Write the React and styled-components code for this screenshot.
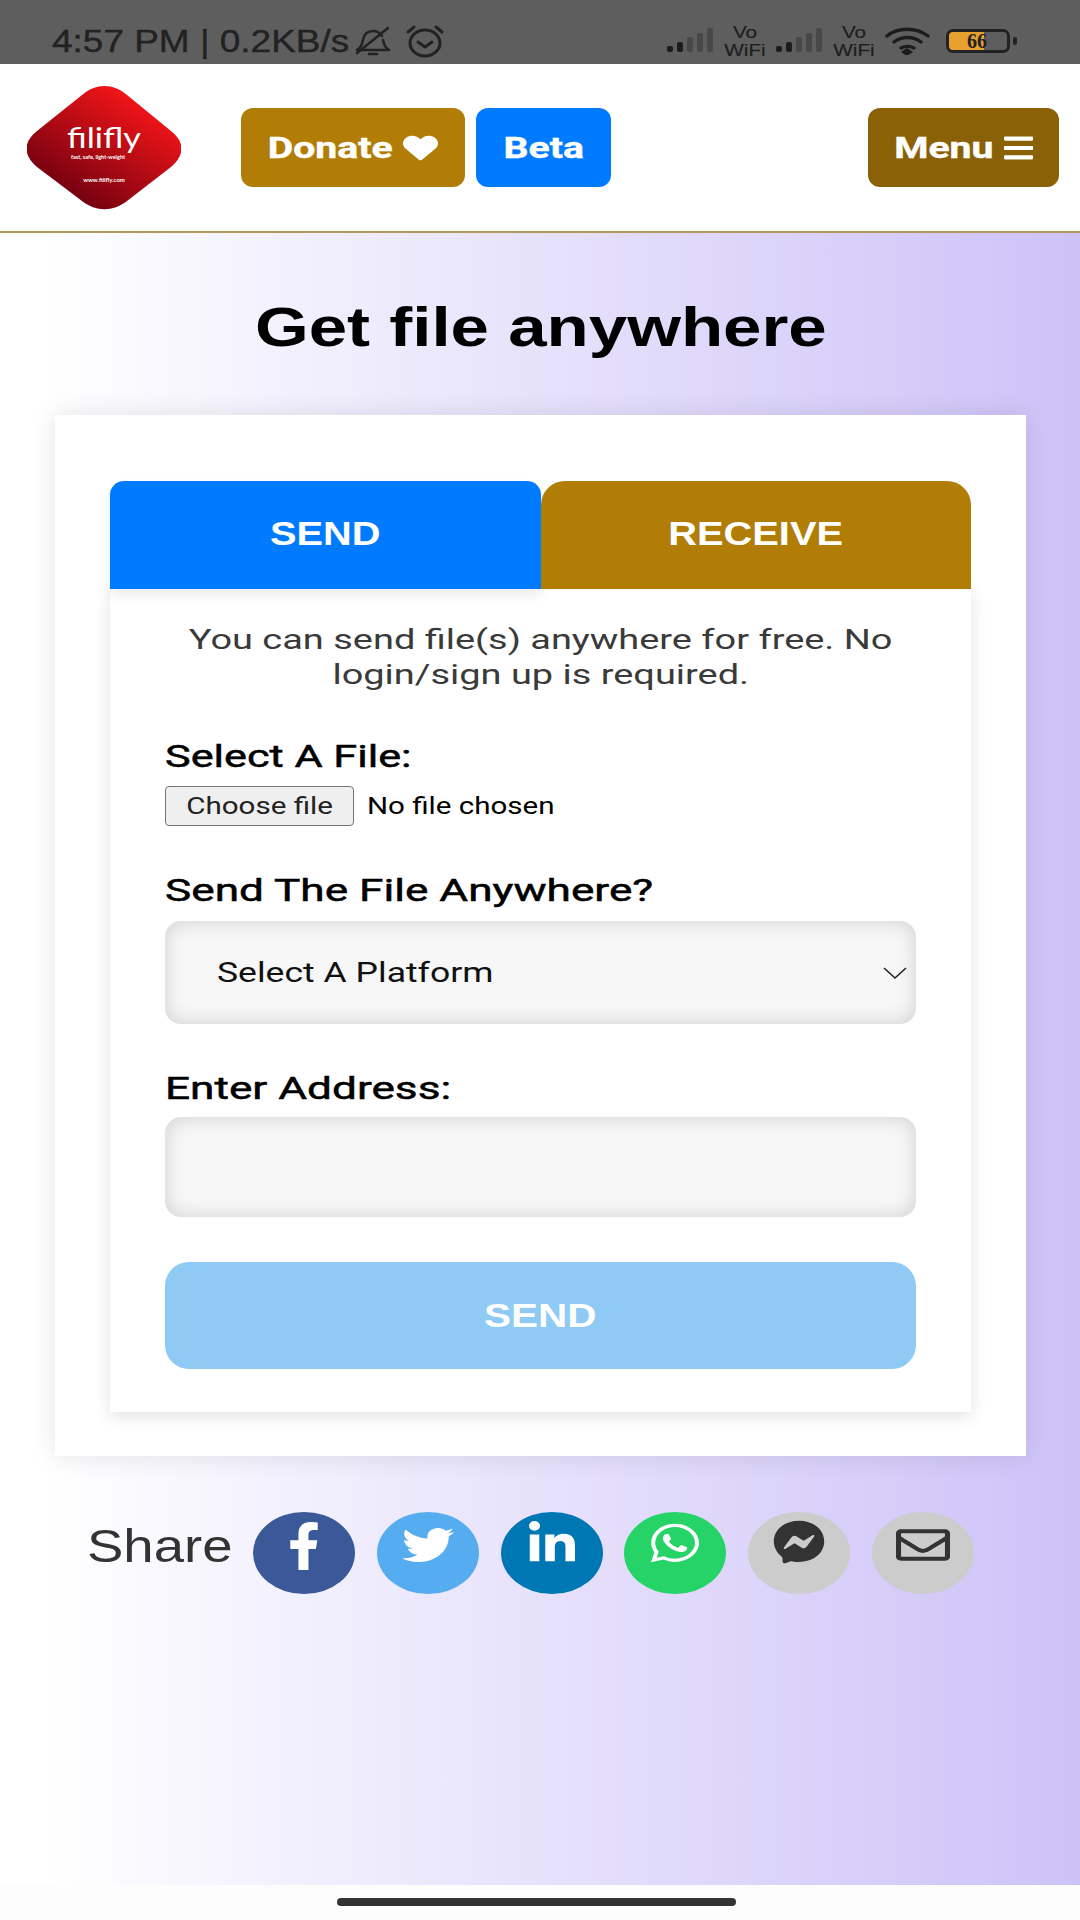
import React from 'react';
import styled, { createGlobalStyle } from 'styled-components';
import { FaHeart, FaBars, FaFacebookF, FaTwitter, FaLinkedinIn, FaWhatsapp, FaFacebookMessenger, FaRegEnvelope } from 'react-icons/fa';

const GlobalStyle = createGlobalStyle`
  html, body { margin: 0; padding: 0; background: #fdfdfd; }
  * { box-sizing: border-box; }
`;

const Page = styled.div`
  width: 1080px;
  height: 1920px;
  display: flex;
  flex-direction: column;
  overflow: hidden;
  font-family: Roboto, sans-serif;
`;

// the whole screenshot is stretched sideways, text has to follow
const Wide = styled.span`
  display: inline-block;
  white-space: nowrap;
  transform: scaleX(${(p) => p.$x || 1.22});
  transform-origin: ${(p) => p.$origin || 'center'};
  margin: 0 ${(p) => p.$m || 0}px;
`;

const StatusBar = styled.div`
  height: 64px;
  flex: none;
  background: #5e5e5e;
  color: #222;
  display: flex;
  align-items: center;
  padding: 18px 70px 0 52px;
`;

const Clock = styled.div`
  width: 303px;
  font: 32px 'Liberation Sans', sans-serif;
  line-height: 40px;
  -webkit-text-stroke: 0.4px #222;
`;

const StatusIcons = styled.div`
  margin-left: auto;
  display: flex;
  align-items: center;
  gap: 10px;
`;

const VoWifi = styled.div`
  width: 43px;
  padding-top: 2px;
  font: 500 17px/18px 'Liberation Sans', sans-serif;
  text-align: center;
  color: #1e1e1e;
  -webkit-text-stroke: 0.2px #1e1e1e;
`;

const Battery = styled.div`
  width: 64px;
  height: 24px;
  border: 3px solid #222;
  border-radius: 7px;
  margin-left: 6px;
  position: relative;
  font: 700 20px/18px 'Liberation Serif', serif;
  color: #222;
  background: linear-gradient(90deg, #e6a02f 0 60%, transparent 60%);
  padding-left: 18px;
  &::after {
    content: '';
    position: absolute;
    right: -10px;
    top: 5px;
    width: 4px;
    height: 8px;
    background: #222;
    border-radius: 2px;
  }
`;

const Header = styled.header`
  height: 169px;
  flex: none;
  background: #fff;
  border-bottom: 2px solid #b09a60;
  display: flex;
  align-items: center;
  padding: 0 21px 0 27px;
`;

const Logo = styled.svg`
  width: 154px;
  height: 124px;
  flex: none;
  margin-right: 60px;
`;

const NavButton = styled.div`
  height: 79px;
  width: ${(p) => p.$w}px;
  margin-right: ${(p) => p.$mr || 0}px;
  margin-left: ${(p) => (p.$right ? 'auto' : '0')};
  background: ${(p) => p.$bg};
  border-radius: 12px;
  color: #fff;
  font: 700 29px 'Roboto', sans-serif;
  -webkit-text-stroke: 0.4px #fff;
  display: flex;
  align-items: center;
  justify-content: center;
  gap: 10px;
  svg { flex: none; }
`;

const Main = styled.main`
  flex: 1;
  background: linear-gradient(90deg, #fff 4%, #cdc2f8 100%);
  padding: 0 54px 0 55px;
`;

const Title = styled.h1`
  margin: 0;
  height: 182px;
  padding-top: 60px;
  text-align: center;
  font: 700 56px/68px 'Liberation Sans', sans-serif;
  color: #000;
`;

const Card = styled.section`
  background: #fff;
  height: 1041px;
  padding: 66px 55px 0;
  box-shadow: 0 0 24px rgba(0, 0, 0, 0.1);
`;

const Tabs = styled.div`
  display: grid;
  grid-template-columns: 431px 430px;
  height: 108px;
`;

const Tab = styled.div`
  background: ${(p) => p.$bg};
  border-radius: ${(p) => (p.$last ? '24px 24px 0 0' : '14px 14px 0 0')};
  color: #fff;
  font: 700 34px 'Liberation Sans', sans-serif;
  display: flex;
  align-items: center;
  justify-content: center;
  padding-bottom: 3px;
  box-shadow: ${(p) => (p.$last ? 'none' : '0 6px 12px rgba(0, 0, 0, 0.08)')};
`;

const Panel = styled.div`
  height: 823px;
  padding: 33px 55px 0;
  box-shadow: 0 4px 16px rgba(0, 0, 0, 0.12);
`;

const Intro = styled.p`
  margin: 0 0 46px;
  text-align: center;
  font: 400 28px/35px Roboto, sans-serif;
  color: #3a3a3a;
`;

const Label = styled.div`
  font: 400 32px/36px Roboto, sans-serif;
  -webkit-text-stroke: 0.5px #000;
  color: #000;
  margin-bottom: ${(p) => p.$mb || 0}px;
`;

const FileRow = styled.div`
  display: flex;
  align-items: center;
  height: 40px;
  margin: 12px 0 46px;
  font: 400 24px Roboto, sans-serif;
  color: #000;
`;

const ChooseFile = styled.div`
  width: 189px;
  height: 40px;
  background: #efefef;
  border: 1px solid #767676;
  border-radius: 4px;
  color: #222;
  display: flex;
  align-items: center;
  justify-content: center;
  margin-right: 13px;
`;

const Field = styled.div`
  height: ${(p) => p.$h}px;
  background: #f7f7f7;
  border-radius: 16px;
  box-shadow: inset 0 0 20px rgba(0, 0, 0, 0.16);
  display: flex;
  align-items: center;
  justify-content: space-between;
  padding: 0 9px 0 52px;
  margin-bottom: ${(p) => p.$mb}px;
  font: 400 28px Roboto, sans-serif;
  color: #111;
`;

const SendButton = styled.div`
  height: 107px;
  background: #8fcaf4;
  border-radius: 24px;
  color: #fff;
  font: 700 34px 'Liberation Sans', sans-serif;
  display: flex;
  align-items: center;
  justify-content: center;
`;

const ShareRow = styled.div`
  display: flex;
  align-items: center;
  margin-top: 56px;
  padding-left: 32px;
  height: 82px;
`;

const ShareLabel = styled.div`
  width: 166px;
  padding-bottom: 16px;
  font: 400 47px 'Liberation Sans', sans-serif;
  color: #333;
`;

const Circle = styled.div`
  width: 102px;
  height: 82px;
  border-radius: 50%;
  background: ${(p) => p.$bg};
  color: ${(p) => p.$fg || '#fff'};
  margin-right: 21.8px;
  display: flex;
  justify-content: center;
  padding-top: ${(p) => p.$top || 0}px;
  flex: none;
`;

const HomeStrip = styled.div`
  height: 35px;
  flex: none;
  background: #fdfdfd;
  display: flex;
  justify-content: center;
  padding: 13px 7px 0 0;
`;

const HomeBar = styled.div`
  width: 399px;
  height: 8px;
  border-radius: 4px;
  background: #333;
`;

const Stretched = ({ as: Icon, w, h }) => (
  <Icon style={{ width: w, height: h }} preserveAspectRatio="none" />
);

const Signal = () => (
  <svg width="46" height="26" viewBox="0 0 46 26">
    <rect x="0" y="18" width="6" height="6" rx="2" fill="#1c1c1c" />
    <rect x="10" y="14" width="6" height="10" rx="2" fill="#1c1c1c" />
    <rect x="20" y="9" width="6" height="15" rx="2" fill="#484848" />
    <rect x="30" y="5" width="6" height="19" rx="2" fill="#484848" />
    <rect x="40" y="0" width="6" height="24" rx="2" fill="#484848" />
  </svg>
);

export default function App() {
  return (
    <Page>
      <GlobalStyle />
      <StatusBar>
        <Clock>
          <Wide $origin="left" $x={1.155}>4:57 PM | 0.2KB/s</Wide>
        </Clock>
        <svg width="36" height="30" viewBox="0 0 36 30" fill="none" stroke="#222" strokeWidth="2.6" strokeLinecap="round" strokeLinejoin="round">
          <path d="M2 24c4-2 5-5 6-10 1-6 5-9 10-9 4 0 7 2 9 5M28 14c1 5 2 8 6 10H6" />
          <path d="M33 2 2 27M14 28h8" />
        </svg>
        <svg width="40" height="34" viewBox="0 0 40 34" fill="none" stroke="#222" strokeWidth="3" strokeLinecap="round" strokeLinejoin="round" style={{ marginLeft: 14 }}>
          <ellipse cx="20" cy="19" rx="15" ry="13" />
          <path d="M13 18l7 5 7-5M3 8l6-5M37 8l-6-5" />
        </svg>
        <StatusIcons>
          <Signal />
          <VoWifi><Wide>Vo<br />WiFi</Wide></VoWifi>
          <Signal />
          <VoWifi><Wide>Vo<br />WiFi</Wide></VoWifi>
          <svg width="45" height="28" viewBox="0 0 45 28" fill="none" stroke="#1c1c1c" strokeWidth="3.4" strokeLinecap="round">
            <path d="M2 9c11-9 29-9 41 0M9 15c8-6 19-6 27 0M16 21c4-2 9-2 13 0" />
            <path d="M19 25l3-2 3 2-3 2z" fill="#1c1c1c" />
          </svg>
          <Battery>66</Battery>
        </StatusIcons>
      </StatusBar>

      <Header>
        <Logo viewBox="0 0 154 124">
          <defs>
            <linearGradient id="logoFill" x1="0.2" y1="0.9" x2="0.8" y2="0.15">
              <stop offset="0" stopColor="#6c0010" />
              <stop offset="1" stopColor="#f51518" />
            </linearGradient>
          </defs>
          <path
            d="M55 9c14-12 31-12 45 0l44 36c14 11 14 24 0 36l-44 34c-14 11-31 11-45 0L10 81C-4 69-4 56 10 45z"
            fill="url(#logoFill)"
          />
          <text x="77" y="62" textAnchor="middle" fill="#fff" fontFamily="Lato, sans-serif" fontSize="29" textLength="74" lengthAdjust="spacingAndGlyphs">filifly</text>
          <text x="71" y="73" textAnchor="middle" fill="#fff" fontFamily="Lato, sans-serif" fontSize="5.5" fontWeight="700">fast, safe, light-weight</text>
          <text x="77" y="96" textAnchor="middle" fill="#fff" fontFamily="Lato, sans-serif" fontSize="6" fontWeight="700">www.filifly.com</text>
        </Logo>
        <NavButton $w={224} $mr={11} $bg="#b27d06">
          <Wide $x={1.35} $m={16}>Donate</Wide>
          <Stretched as={FaHeart} w={35} h={28} />
        </NavButton>
        <NavButton $w={135} $bg="#007bff"><Wide $x={1.35}>Beta</Wide></NavButton>
        <NavButton $w={191} $right $bg="#8b6107">
          <Wide $x={1.35} $m={13}>Menu</Wide>
          <Stretched as={FaBars} w={29} h={30} />
        </NavButton>
      </Header>

      <Main>
        <Title><Wide $x={1.233}>Get file anywhere</Wide></Title>
        <Card>
          <Tabs>
            <Tab $bg="#007bff"><Wide $x={1.17}>SEND</Wide></Tab>
            <Tab $bg="#b27d06" $last><Wide $x={1.17}>RECEIVE</Wide></Tab>
          </Tabs>
          <Panel>
            <Intro>
              <Wide $x={1.355}>You can send file(s) anywhere for free. No</Wide>
              <br />
              <Wide $x={1.355}>login/sign up is required.</Wide>
            </Intro>
            <Label><Wide $origin="left" $x={1.35}>Select A File:</Wide></Label>
            <FileRow>
              <ChooseFile><Wide $x={1.23}>Choose file</Wide></ChooseFile>
              <Wide $origin="left" $x={1.23}>No file chosen</Wide>
            </FileRow>
            <Label $mb={13}><Wide $origin="left" $x={1.38}>Send The File Anywhere?</Wide></Label>
            <Field $h={103} $mb={46}>
              <Wide $origin="left" $x={1.27}>Select A Platform</Wide>
              <svg width="24" height="14" viewBox="0 0 24 14" fill="none" stroke="#222" strokeWidth="1.6">
                <path d="M1 2l11 10L23 2" />
              </svg>
            </Field>
            <Label $mb={11}><Wide $origin="left" $x={1.38}>Enter Address:</Wide></Label>
            <Field $h={100} $mb={45} />
            <SendButton><Wide $x={1.19}>SEND</Wide></SendButton>
          </Panel>
        </Card>
        <ShareRow>
          <ShareLabel><Wide $origin="left" $x={1.16}>Share</Wide></ShareLabel>
          <Circle $bg="#3b5998" $top={10}><Stretched as={FaFacebookF} w={32} h={48} /></Circle>
          <Circle $bg="#55acee" $top={12}><Stretched as={FaTwitter} w={52} h={42} /></Circle>
          <Circle $bg="#0077b5" $top={9}><Stretched as={FaLinkedinIn} w={46} h={46} /></Circle>
          <Circle $bg="#25d366" $top={9}><Stretched as={FaWhatsapp} w={48} h={44} /></Circle>
          <Circle $bg="#cccccc" $fg="#333" $top={8}><Stretched as={FaFacebookMessenger} w={52} h={44} /></Circle>
          <Circle $bg="#cccccc" $fg="#333" $top={12}><Stretched as={FaRegEnvelope} w={54} h={42} /></Circle>
        </ShareRow>
      </Main>

      <HomeStrip><HomeBar /></HomeStrip>
    </Page>
  );
}
